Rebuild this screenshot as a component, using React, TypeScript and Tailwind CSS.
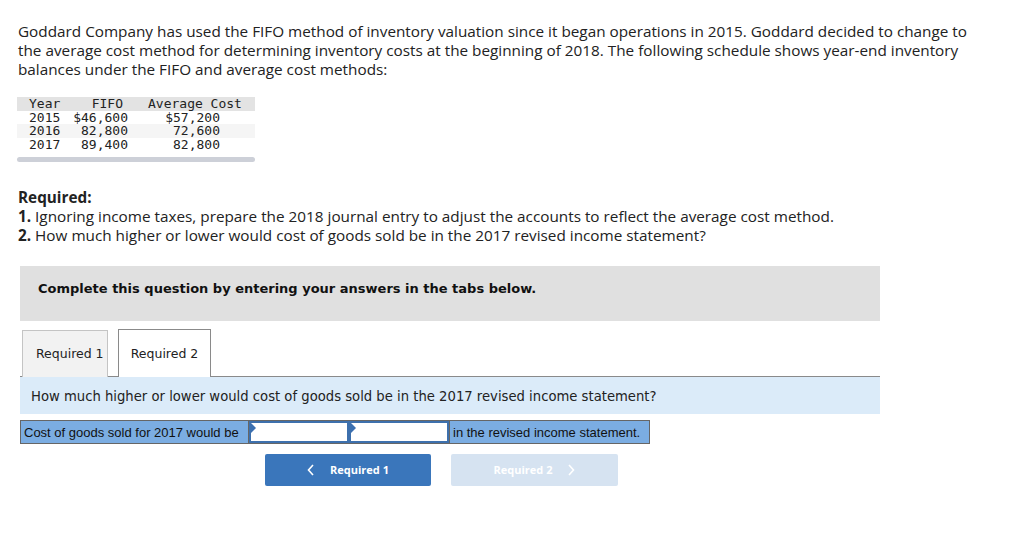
import React from 'react';

const rows = [
  { year: '2015', fifo: '$46,600', avg: '$57,200' },
  { year: '2016', fifo: '82,800', avg: '72,600' },
  { year: '2017', fifo: '89,400', avg: '82,800' },
];

function ScheduleTable() {
  return (
    <div className="mt-[18px] w-[238px] font-['DejaVu_Sans_Mono',monospace] text-[13px] leading-[13.6px] text-[#222]">
      <div className="flex bg-[#e3e3e3]">
        <span className="w-[45px] pl-[12px]">Year</span>
        <span className="w-[67px] pr-[6px] text-right">FIFO</span>
        <span className="w-[126px] pl-[19px]">Average Cost</span>
      </div>
      {rows.map((r, i) => (
        <div key={r.year} className={`flex ${i === 1 ? 'bg-[#f5f5f5]' : ''}`}>
          <span className="w-[45px] pl-[12px]">{r.year}</span>
          <span className="w-[67px] pr-[1px] text-right">{r.fifo}</span>
          <span className="w-[126px] pr-[35px] text-right">{r.avg}</span>
        </div>
      ))}
      {/* horizontal scrollbar */}
      <div className="mt-[6px] h-[5px] w-full rounded-full bg-[#cdd0d8]" />
    </div>
  );
}

function Marker() {
  return (
    <span className="absolute left-0 top-0 h-0 w-0 border-l-[5px] border-t-[5px] border-b-[5px] border-l-[#3b6fb0] border-t-transparent border-b-transparent" />
  );
}

export default function App() {
  return (
    <div className="min-h-screen bg-white px-[17px] pt-[22px] font-['Open_Sans',sans-serif] text-[#222]">
      <p className="w-[990px] pl-[1px] text-[15.3px] leading-[19px]">
        Goddard Company has used the FIFO method of inventory valuation since it began operations in 2015. Goddard decided to change to
        <br />
        the average cost method for determining inventory costs at the beginning of 2018. The following schedule shows year-end inventory
        <br />
        balances under the FIFO and average cost methods:
      </p>

      <ScheduleTable />

      <div className="mt-[26px] pl-[1px] text-[15.3px] leading-[19px]">
        <p className="font-bold">Required:</p>
        <p>
          <span className="font-bold">1.</span> Ignoring income taxes, prepare the 2018 journal entry to adjust the accounts to reflect the average cost method.
        </p>
        <p>
          <span className="font-bold">2.</span> How much higher or lower would cost of goods sold be in the 2017 revised income statement?
        </p>
      </div>

      <div className="ml-[3px] mt-[21px] w-[860px] font-['DejaVu_Sans',Verdana,sans-serif]">
        <div className="h-[55px] bg-[#e0e0e0] pl-[18px] pt-[15px] text-[13px] font-bold leading-[16px] text-[#111]">
          Complete this question by entering your answers in the tabs below.
        </div>

        <div className="mt-[8px] flex items-end border-b border-[#8a8a8a] text-[12.5px] text-[#222]">
          <div className="ml-[2px] -mb-px flex h-[47px] w-[86px] items-center border border-b-0 border-[#c4c4c4] bg-[#f2f2f2] pl-[13px]">
            Required 1
          </div>
          <div className="ml-[10px] -mb-px flex h-[48px] w-[93px] items-center justify-center border border-b-0 border-[#8a8a8a] bg-white">
            Required 2
          </div>
        </div>

        <div className="flex h-[37px] items-center bg-[#dbebf9] pl-[11px] pt-[2px] text-[13.2px] text-[#222]">
          How much higher or lower would cost of goods sold be in the 2017 revised income statement?
        </div>

        <div className="mt-[6px] flex h-[24px] w-[630px] border border-[#666] bg-[#7badE2] font-['Liberation_Sans',Arial,sans-serif] text-[13px] text-[#111]">
          <div className="flex w-[228px] items-center border-r border-[#666] pl-[3px]">Cost of goods sold for 2017 would be</div>
          <div className="relative w-[100px] border-2 border-[#3d70ad] bg-white">
            <Marker />
          </div>
          <div className="relative w-[100px] border-2 border-[#3d70ad] bg-white">
            <Marker />
          </div>
          <div className="flex flex-1 items-center border-l border-[#666] pl-[3px]">in the revised income statement.</div>
        </div>

        <div className="mt-[10px] flex gap-[20px] pl-[245px] font-['Open_Sans',sans-serif] text-[11px] font-bold text-white">
          <button className="flex h-[32px] w-[166px] items-center justify-center gap-[15px] rounded-[2px] bg-[#3a76bb]">
            <svg width="8" height="12" viewBox="0 0 8 12" fill="none" stroke="white" strokeWidth="1.6">
              <path d="M6 1 1.5 6 6 11" />
            </svg>
            <span>Required 1</span>
          </button>
          <button className="flex h-[32px] w-[167px] items-center justify-center gap-[15px] rounded-[2px] bg-[#d6e3f1]">
            <span>Required 2</span>
            <svg width="8" height="12" viewBox="0 0 8 12" fill="none" stroke="white" strokeWidth="1.6">
              <path d="M2 1 6.5 6 2 11" />
            </svg>
          </button>
        </div>
      </div>
    </div>
  );
}
